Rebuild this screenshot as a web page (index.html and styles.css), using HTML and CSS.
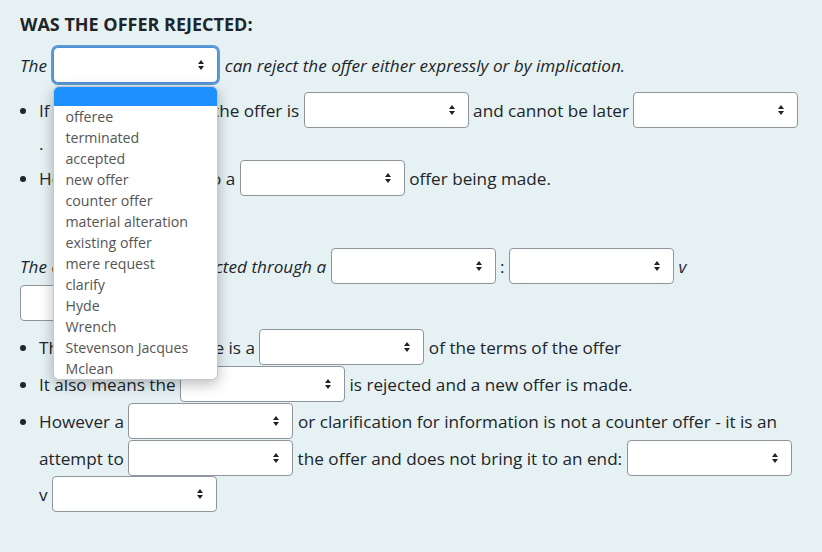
FILE: index.html
```html
<!DOCTYPE html>
<html lang="en">
<head>
    <meta charset="UTF-8" />
    <meta name="viewport" content="width=device-width, initial-scale=1" />
    <title>Was the offer rejected</title>
    <link rel="stylesheet" href="styles.css">
</head>
<body>
    <div class="page">
        <h5 class="title">WAS THE OFFER REJECTED:</h5>

        <p class="line"><em>The <span class="pick focused"><span class="menu">
                <span class="opt selected"></span>
                <span class="opt">offeree</span>
                <span class="opt">terminated</span>
                <span class="opt">accepted</span>
                <span class="opt">new offer</span>
                <span class="opt">counter offer</span>
                <span class="opt">material alteration</span>
                <span class="opt">existing offer</span>
                <span class="opt">mere request</span>
                <span class="opt">clarify</span>
                <span class="opt">Hyde</span>
                <span class="opt">Wrench</span>
                <span class="opt">Stevenson Jacques</span>
                <span class="opt">Mclean</span>
            </span></span> can reject the offer either expressly or by implication.</em></p>

        <ul class="points">
            <li>If an offeree rejects it the offer is <span class="pick"></span> and cannot be later <span class="pick"></span> .</li>
            <li>However, it can lead to a <span class="pick"></span> offer being made.</li>
        </ul>

        <p class="line gap"><em>The offer may also be rejected through a</em> <span class="pick"></span> : <span class="pick"></span> <em>v</em> <span class="pick"></span></p>

        <ul class="points">
            <li>This occurs when there is a <span class="pick"></span> of the terms of the offer</li>
            <li>It also means the <span class="pick"></span> is rejected and a new offer is made.</li>
            <li>However a <span class="pick"></span> or clarification for information is not a counter offer - it is an attempt to <span class="pick"></span> the offer and does not bring it to an end: <span class="pick"></span> v <span class="pick"></span></li>
        </ul>
    </div>
</body>
</html>
```

FILE: styles.css
```css
body {
    margin: 0;
    background-color: #e6f1f4;
    font-family: "Open Sans", "Noto Sans", sans-serif;
    font-size: 17.15px;
    color: #212529;
}
.page {
    position: relative;
    padding: 12px 20px;
}
.title {
    margin: 0 0 11px;
    font-size: 18px;
    line-height: 24px;
    font-weight: 700;
}
p, li {
    line-height: 32px;
}
.line {
    margin: 0 0 8px;
}
.gap {
    margin-top: 51px;
}
.points {
    margin: 0 0 8px;
    padding-left: 19px;
}

/* fake select boxes */
.pick {
    display: inline-block;
    position: relative;
    width: 165px;
    height: 36px;
    box-sizing: border-box;
    background: #fff;
    border: 1px solid #8f959c;
    border-radius: 4px;
    vertical-align: -11.7px;
    margin-bottom: 0.7px;
    font-style: normal;
}
.pick::before,
.pick::after {
    content: "";
    position: absolute;
    right: 13px;
    border-left: 3.5px solid transparent;
    border-right: 3.5px solid transparent;
}
.pick::before {
    top: 12px;
    border-bottom: 4px solid #222;
}
.pick::after {
    top: 18px;
    border-top: 4px solid #222;
}
.pick.focused {
    margin-left: 2px;
    margin-right: 2px;
    border-color: #4f8fd6;
    box-shadow: 0 0 0 2px #5b9bd5;
    border-radius: 5px;
}

/* open dropdown list */
.menu {
    position: absolute;
    z-index: 5;
    top: 38px;
    left: -1px;
    width: 165px;
    box-sizing: border-box;
    display: block;
    background: #fff;
    border: 1px solid #c4c8cc;
    border-radius: 6px;
    overflow: hidden;
    box-shadow: 0 4px 14px rgba(0, 0, 0, 0.28);
    font-size: 14.2px;
    line-height: 21px;
    color: #555;
}
.opt {
    display: block;
    height: 21px;
    padding-left: 11px;
    white-space: nowrap;
}
.opt.selected {
    height: 19px;
    background-color: #1e90ff;
}
```
